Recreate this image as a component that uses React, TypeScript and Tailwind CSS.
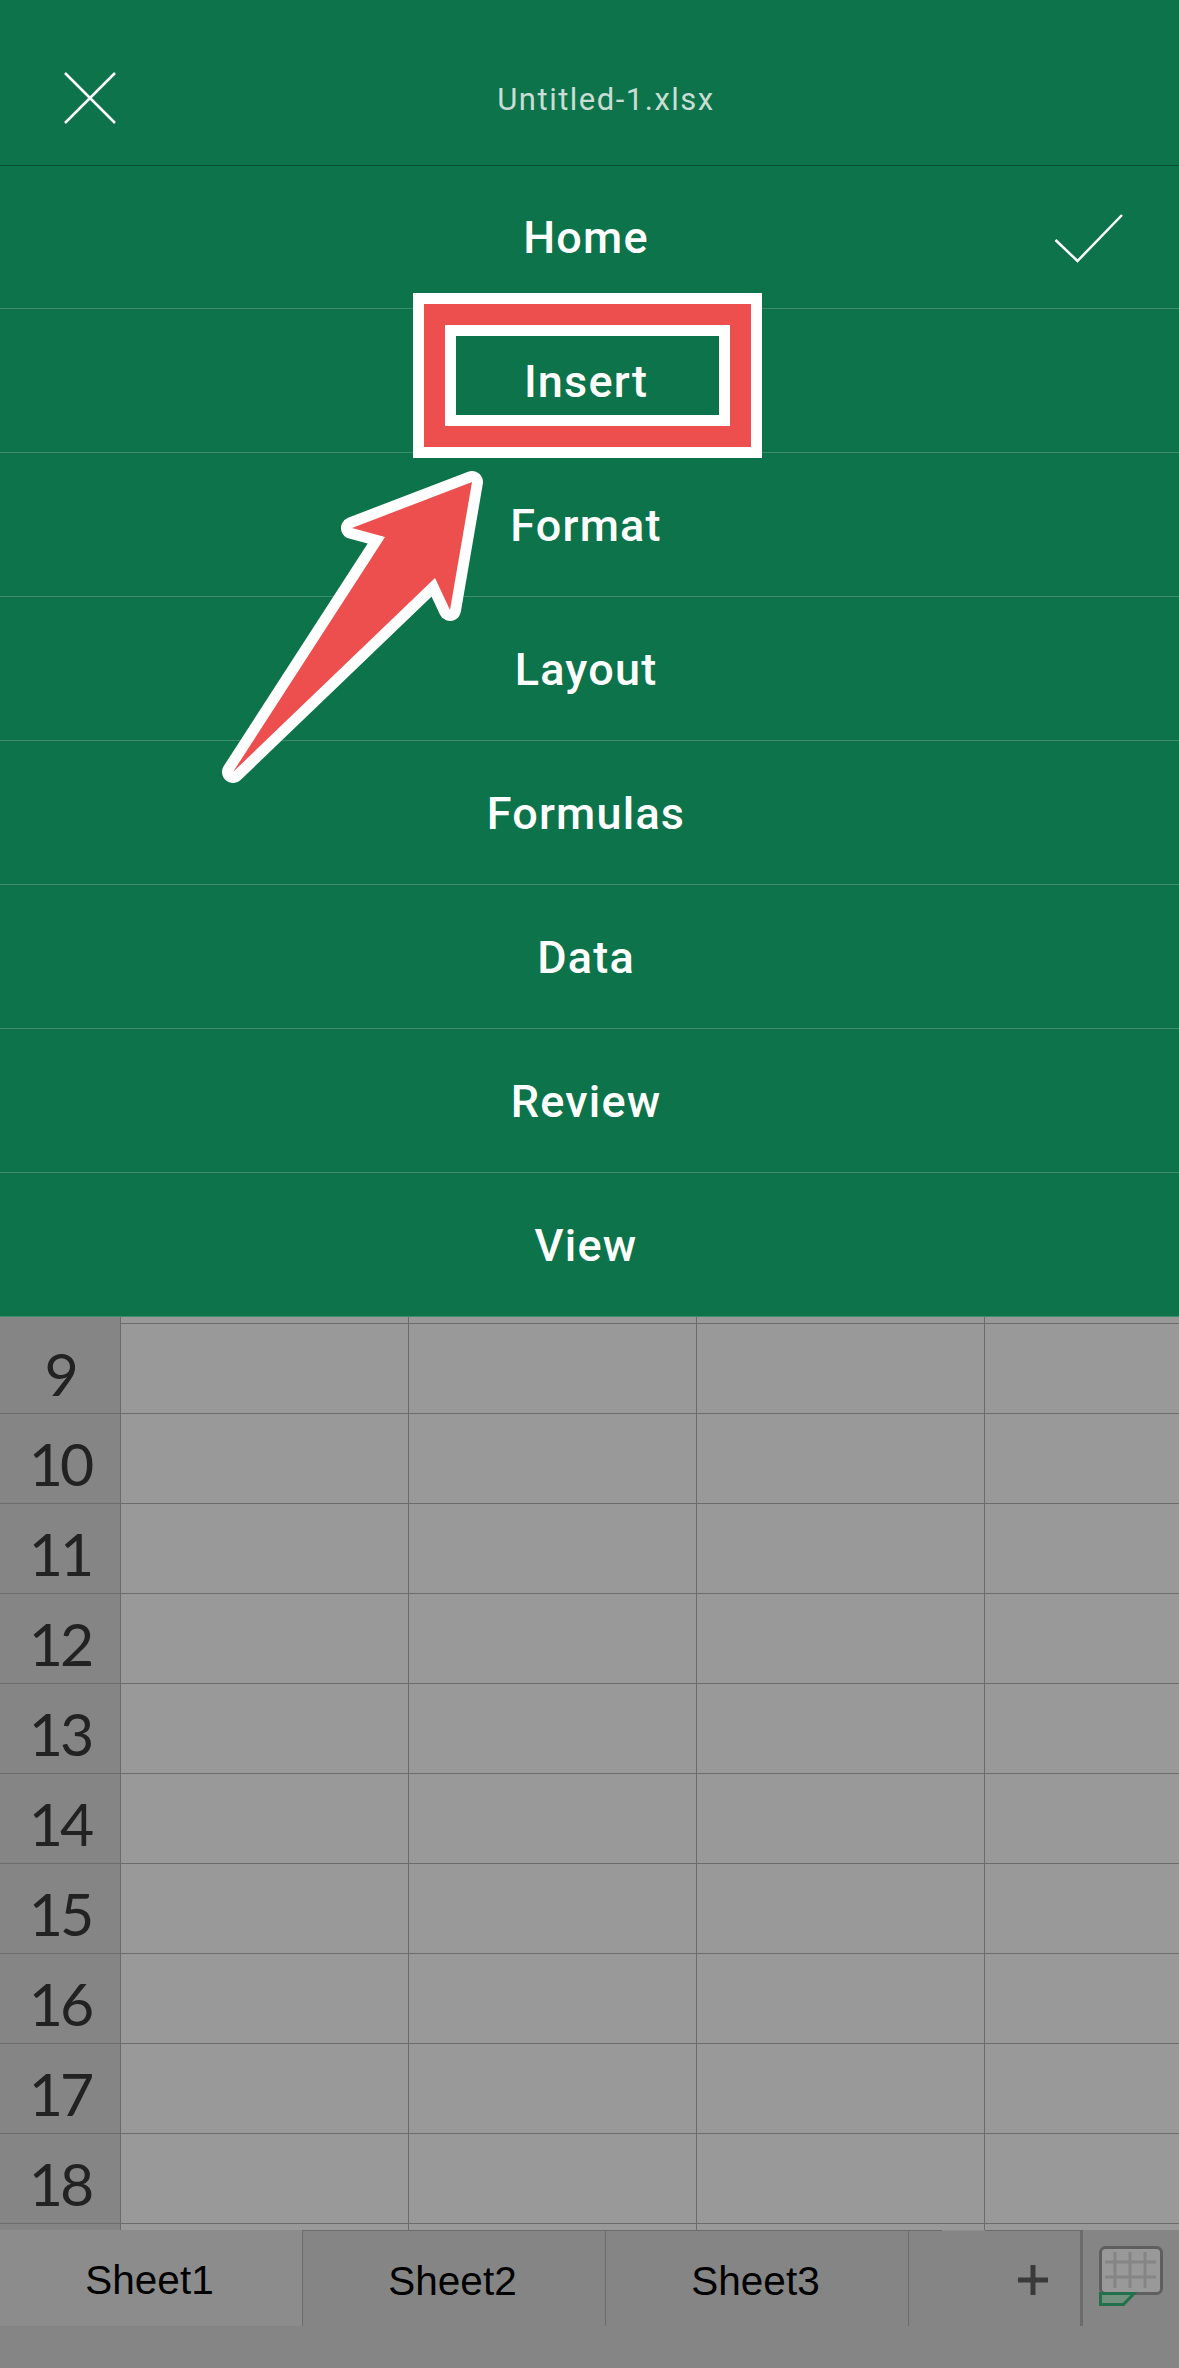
const menuItems = ['Home', 'Insert', 'Format', 'Layout', 'Formulas', 'Data', 'Review', 'View'];
const rowNumbers = [9, 10, 11, 12, 13, 14, 15, 16, 17, 18];
const sheets = ['Sheet1', 'Sheet2', 'Sheet3'];

function GridRow({ label, height }: { label?: number; height: string }) {
  return (
    <div className={`flex shrink-0 ${height} border-b border-[#6c6c6c]`}>
      <div className="flex w-[121px] shrink-0 items-center justify-center border-r border-[#6c6c6c] bg-[#858585] pt-[10px] font-['Lato',sans-serif] text-[59px] leading-none tracking-[-3px] text-[#222222]">
        {label}
      </div>
      {[0, 1, 2].map((i) => (
        <div key={i} className="w-[288px] shrink-0 border-r border-[#6c6c6c]" />
      ))}
      <div className="flex-1" />
    </div>
  );
}

function KeyboardIcon() {
  return (
    <svg width="66" height="62" viewBox="0 0 66 62" fill="none">
      <rect x="1.500" y="1.500" width="61" height="46" rx="5" fill="#999999" stroke="#5f5f5f" strokeWidth="3" />
      <path d="M6 16h51M6 31h51M16 6v36M31 6v36M46 6v36" stroke="#858585" strokeWidth="3" />
      <path d="M1.500 47.500H35L24.500 58.500H1.500Z" fill="#72917f" stroke="#23704c" strokeWidth="3" />
    </svg>
  );
}

export default function App() {
  return (
    <div className="relative flex h-[2368px] w-[1179px] flex-col overflow-hidden bg-[#858585] font-['Roboto',sans-serif]">
      {/* menu sheet */}
      <div className="h-[1317px] shrink-0 border-b border-[#3d8c6b] bg-[#0c734b]">
        <div className="relative flex h-[166px] items-center justify-center border-b border-[#0a4f33] pl-[33px] pt-[36px]">
          <svg className="absolute left-[64px] top-[72px]" width="52" height="52" viewBox="0 0 52 52" fill="none">
            <path d="M1 1l50 50M51 1L1 51" stroke="#ffffff" strokeWidth="2.5" />
          </svg>
          <span className="text-[31px] tracking-[1.5px] text-[#c9ddd3]">Untitled-1.xlsx</span>
        </div>
        {menuItems.map((item, i) => (
          <div
            key={item}
            className={`relative flex items-center justify-center pr-[7px] pt-[2px] text-[45px] font-medium tracking-[1.2px] text-white ${
              i === 0 || i === menuItems.length - 1 ? 'h-[143px]' : 'h-[144px]'
            } ${i < menuItems.length - 1 ? 'border-b border-[#3d8c6b]' : ''}`}
          >
            {item}
            {i === 0 && (
              <svg className="absolute left-[1054px] top-[48px]" width="70" height="50" viewBox="0 0 70 50" fill="none">
                <path d="M1.500 26l22 21L68 1" stroke="#ffffff" strokeWidth="2.5" />
              </svg>
            )}
          </div>
        ))}
      </div>

      {/* dimmed sheet */}
      <div className="flex h-[913px] shrink-0 flex-col overflow-hidden bg-[#999999]">
        <GridRow height="h-[7px]" />
        {rowNumbers.map((n) => (
          <GridRow key={n} label={n} height="h-[90px]" />
        ))}
        <GridRow height="h-[10px]" />
      </div>

      {/* sheet tabs */}
      <div className="flex h-[96px] shrink-0 font-['Liberation_Sans',sans-serif] text-[40.500px] text-black">
        {sheets.map((sheet, i) => (
          <div
            key={sheet}
            className={`flex w-[303px] shrink-0 items-center justify-center border-r border-[#6c6c6c] pr-[3px] pt-[5px] ${
              i === 0 ? 'bg-[#8c8c8c]' : 'border-t bg-[#858585]'
            }`}
          >
            {sheet}
          </div>
        ))}
        <div className="relative flex w-[174px] shrink-0 items-center justify-end border-r-[3px] border-t border-[#6c6c6c] pr-[32px] pt-[3px]">
          <div className="absolute -top-px left-[33px] h-px w-[43px] bg-[#8f8f8f]" />
          <svg width="30" height="30" viewBox="0 0 30 30">
            <path d="M0 15h30M15 0v30" stroke="#3a3a3a" strokeWidth="5" />
          </svg>
        </div>
        <div className="flex flex-1 pl-[16px] pt-[16px]">
          <KeyboardIcon />
        </div>
      </div>

      {/* annotation */}
      <div className="absolute left-[413px] top-[293px] h-[165px] w-[349px] border-[11px] border-white">
        <div className="h-full w-full border-[21px] border-[#ed4f4e]">
          <div className="h-full w-full border-[11px] border-white" />
        </div>
      </div>
      <svg className="absolute left-0 top-0" width="1179" height="1000" viewBox="0 0 1179 1000" fill="none">
        <path
          d="M472 482L352 528L385 537L233 772L435 578L450 610Z"
          fill="#ed4f4e"
          stroke="#ffffff"
          strokeWidth="22"
          strokeLinejoin="round"
          className="[paint-order:stroke]"
        />
      </svg>
    </div>
  );
}
